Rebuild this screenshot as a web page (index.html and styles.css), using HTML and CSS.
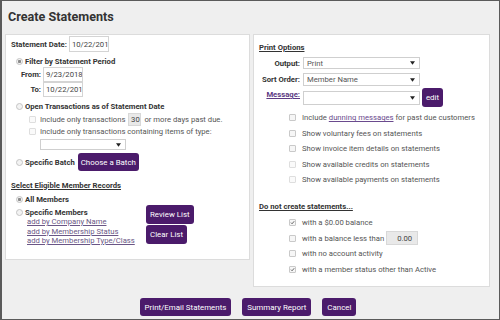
FILE: index.html
```html
<!DOCTYPE html>
<html>
<head>
<meta charset="utf-8">
<link rel="stylesheet" href="styles.css">
</head>
<body>
<div class="frame">
  <div class="header"><h1 class="title">Create Statements</h1></div>
  <div class="main">
    <div class="panel left">
      <div class="row r1"><span class="lbl">Statement Date:</span><span class="inp w40">10/22/2018</span></div>
      <div class="row r2"><span class="radio on"></span><span class="lbl">Filter by Statement Period</span></div>
      <div class="row r3"><span class="lbl lab-r">From:</span><span class="inp w40">9/23/2018</span></div>
      <div class="row r4"><span class="lbl lab-r">To:</span><span class="inp w40">10/22/2018</span></div>
      <div class="row r5"><span class="radio"></span><span class="lbl">Open Transactions as of Statement Date</span></div>
      <div class="row r6 ind"><span class="cb dim"></span><span class="txt">Include only transactions</span><span class="inp dis w12">30</span><span class="txt">or more days past due.</span></div>
      <div class="row r7 ind"><span class="cb dim"></span><span class="txt">Include only transactions containing items of type:</span></div>
      <div class="row r8"><span class="sel w85"><span></span><svg class="tri" viewBox="0 0 6 4"><path d="M0 0h6L3 4z"/></svg></span></div>
      <div class="row r9"><span class="radio"></span><span class="lbl">Specific Batch</span><span class="btn batch">Choose a Batch</span></div>
      <div class="row r10"><span class="lbl ul">Select Eligible Member Records</span></div>
      <div class="row r11"><span class="radio on"></span><span class="lbl">All Members</span></div>
      <div class="members">
        <div class="mcol">
          <div class="row r12"><span class="radio"></span><span class="lbl">Specific Members</span></div>
          <a class="link">add by Company Name</a>
          <a class="link">add by Membership Status</a>
          <a class="link">add by Membership Type/Class</a>
        </div>
        <div class="bcol">
          <span class="btn">Review List</span>
          <span class="btn">Clear List</span>
        </div>
      </div>
    </div>
    <div class="panel right">
      <div class="row h1"><span class="lbl ul">Print Options</span></div>
      <div class="row o1"><span class="lbl flab">Output:</span><span class="sel w116"><span>Print</span><svg class="tri" viewBox="0 0 6 4"><path d="M0 0h6L3 4z"/></svg></span></div>
      <div class="row o2"><span class="lbl flab">Sort Order:</span><span class="sel w116"><span>Member Name</span><svg class="tri" viewBox="0 0 6 4"><path d="M0 0h6L3 4z"/></svg></span></div>
      <div class="row o3"><span class="lbl flab"><a class="mlink">Message:</a></span><span class="sel w116 tall"><span></span><svg class="tri" viewBox="0 0 6 4"><path d="M0 0h6L3 4z"/></svg></span><span class="btn edit">edit</span></div>
      <div class="checks">
        <div class="crow"><span class="cb"></span><span class="txt">Include <a class="dlink">dunning messages</a> for past due customers</span></div>
        <div class="crow"><span class="cb"></span><span class="txt">Show voluntary fees on statements</span></div>
        <div class="crow"><span class="cb"></span><span class="txt">Show invoice item details on statements</span></div>
        <div class="crow"><span class="cb dim"></span><span class="txt">Show available credits on statements</span></div>
        <div class="crow"><span class="cb dim"></span><span class="txt">Show available payments on statements</span></div>
      </div>
      <div class="row h2"><span class="lbl ul">Do not create statements...</span></div>
      <div class="checks c2">
        <div class="crow"><span class="cb on"><svg viewBox="0 0 8 8"><path d="M1.5 4.2l1.8 1.8 3.4-4" fill="none" stroke="#444" stroke-width="1.3"/></svg></span><span class="txt">with a $0.00 balance</span></div>
        <div class="crow"><span class="cb"></span><span class="txt">with a balance less than</span><span class="inp dis w31 num">0.00</span></div>
        <div class="crow"><span class="cb"></span><span class="txt">with no account activity</span></div>
        <div class="crow"><span class="cb on"><svg viewBox="0 0 8 8"><path d="M1.5 4.2l1.8 1.8 3.4-4" fill="none" stroke="#444" stroke-width="1.3"/></svg></span><span class="txt">with a member status other than Active</span></div>
      </div>
    </div>
  </div>
  <div class="footer">
    <span class="btn big">Print/Email Statements</span>
    <span class="btn big">Summary Report</span>
    <span class="btn big">Cancel</span>
  </div>
</div>
</body>
</html>
```
FILE: styles.css
```css
* { box-sizing: border-box; }
html, body { margin: 0; padding: 0; }
body { font-family: Roboto, "Liberation Sans", sans-serif; font-size: 7.7px; color: #333; }
.frame {
  width: 500px; height: 320px;
  background: #efefef;
  border: 1px solid #5a5a5a;
  border-left-width: 2px;
  display: flex; flex-direction: column;
}
.header { height: 30px; display: flex; align-items: center; padding-left: 6px; }
.title { margin: 0; font-size: 12.6px; font-weight: 700; color: #333; }
.main { display: flex; align-items: flex-start; gap: 3px; padding-left: 3px; margin-top: 3px; }
.panel { background: #fff; border: 1px solid #dcdcdc; }
.left { width: 245px; height: 226px; padding: 0 5px; }
.right { width: 237px; height: 253px; padding: 0 5px; }
.row { display: flex; align-items: center; white-space: nowrap; }
.lbl { font-weight: 700; color: #333; font-size: 7.7px; }
.txt { color: #555; font-size: 7.7px; }
.ul { text-decoration: underline; }
.inp {
  display: inline-flex; align-items: center; height: 100%;
  border: 1px solid #d4d4d4; color: #444; padding: 0 1px 0 2px;
  overflow: hidden; white-space: nowrap; background: #fff;
}
.w40 { width: 40px; }
.w12 { width: 13px; justify-content: center; margin: 0 3px 0 3px; }
.w31 { width: 32px; justify-content: flex-end; padding-right: 5px; margin-left: 2px; }
.dis { background: #e9e9e9; border-color: #d8d8d8; }
.radio {
  width: 7px; height: 7px; border-radius: 50%;
  border: 1px solid #c4c4c4; background: #f3f3f3;
  margin-right: 2px; flex: none;
}
.radio.on { background: radial-gradient(circle, #8a8a8a 0 1.3px, #f3f3f3 1.9px); }
.cb {
  width: 7px; height: 7px; border: 1px solid #c9c9c9; border-radius: 1px;
  background: #f6f6f6; flex: none; display: inline-flex;
}
.cb.dim { border-color: #dedede; background: #fafafa; }
.cb svg { width: 100%; height: 100%; }
.sel {
  display: inline-flex; align-items: center; justify-content: space-between;
  height: 100%; border: 1px solid #cfcfcf; background: #fff;
  color: #555; padding: 0 4px 0 3px;
}
.tri { width: 5px; height: 4px; fill: #222; }
.w85 { width: 86px; }
.w116 { width: 117px; }
.btn {
  display: inline-flex; align-items: center; justify-content: center;
  background: #4b1b6b; color: #fff; border-radius: 3px;
  font-size: 7.9px; white-space: nowrap; padding: 0 4px;
}

/* left rows */
.r1 { height: 16px; margin-top: 1px; }
.r1 .lbl { margin-right: 2px; padding-left: 0; }
.r2 { height: 10px; margin-top: 4px; padding-left: 5px; }
.r3 { height: 15px; margin-top: 1px; }
.r4 { height: 15px; }
.lab-r { width: 30px; text-align: right; margin-right: 2px; }
.r5 { height: 10px; margin-top: 4px; padding-left: 5px; }
.r6 { height: 13px; margin-top: 2px; }
.ind { padding-left: 18px; }
.ind .cb { margin-right: 4px; }
.r7 { height: 10px; margin-top: 0; }
.r8 { height: 11px; margin-top: 3px; padding-left: 29px; }
.r9 { height: 18px; margin-top: 3px; padding-left: 5px; }
.batch { height: 18px; margin-left: 3px; width: 61px; }
.r10 { height: 10px; margin-top: 9px; padding-left: 0; }
.r11 { height: 10px; margin-top: 4px; padding-left: 5px; }
.members { display: flex; margin-top: 1px; }
.mcol { display: flex; flex-direction: column; width: 135px; }
.r12 { height: 10px; margin-top: 2px; padding-left: 5px; }
.link { color: #6a5686; text-decoration: underline; font-size: 7.7px; padding-left: 16px; line-height: 9.5px; }
.bcol { display: flex; flex-direction: column; gap: 1px; align-items: flex-start; }
.bcol .btn { height: 19px; }

/* right rows */
.h1 { height: 10px; margin-top: 7px; }
.flab { width: 41px; text-align: right; margin-right: 3px; }
.o1 { height: 12px; margin-top: 5px; }
.o2 { height: 13px; margin-top: 4px; }
.o3 { height: 19px; margin-top: 2px; }
.o3 .sel { height: 14px; }
.o3 .flab { align-self: flex-start; padding-top: 2px; }
.mlink { color: #5d3a82; text-decoration: underline; }
.edit { height: 19px; width: 21px; margin-left: 2px; padding: 0; }
.checks { display: flex; flex-direction: column; margin-top: 3px; padding-left: 30px; }
.crow { display: flex; align-items: center; height: 15.5px; white-space: nowrap; }
.crow .cb { margin-right: 6px; }
.dlink { color: #6a4a8e; text-decoration: underline; }
.h2 { height: 10px; margin-top: 14px; }
.c2 { margin-top: 3px; }
.c2 .crow { height: 15.7px; }
.c2 .inp { height: 14px; }

.footer { display: flex; justify-content: center; gap: 11px; margin-top: 11px; padding-right: 5px; }
.big { height: 18px; padding: 0 5px; }
```
